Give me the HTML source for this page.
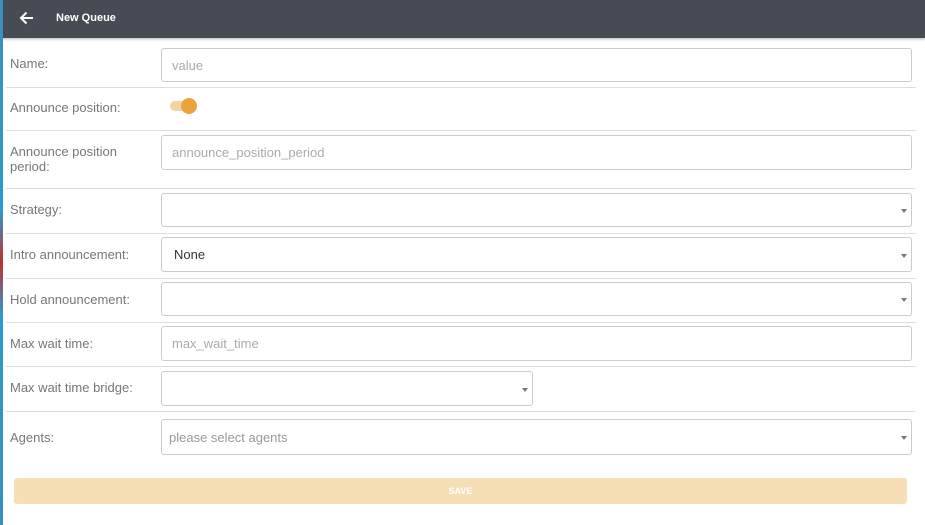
<!DOCTYPE html><html><head><style>
body{margin:0;width:925px;height:525px;overflow:hidden;background:#fff;font-family:"Liberation Sans",sans-serif;position:relative}
.strip{position:absolute;left:0;top:0;width:3px;height:525px;background:linear-gradient(#3a8fc0,#2a9ad0 40%,#c03030 50%,#2a9ad0 60%,#3a8fc0)}
.hdr{position:absolute;left:0;top:0;width:925px;height:38px;background:#474c54;box-shadow:0 1px 3px rgba(0,0,0,.3)}
.hdr .t{position:absolute;left:56px;top:12px;color:#fff;font-size:11px;font-weight:bold}
.lbl{position:absolute;left:10px;color:#777;font-size:13px;line-height:15px}
.sep{position:absolute;left:6px;width:910px;height:1px;background:#ddd}
.in{position:absolute;left:161px;width:751px;border:1px solid #ccc;border-radius:3px;box-sizing:border-box;font-size:13px;color:#aaa;padding-left:10px;display:flex;align-items:center}
.in.sel::after{content:"";position:absolute;right:4px;top:50%;margin-top:-1px;border:3px solid transparent;border-top:4px solid #777;border-bottom:0}
</style></head><body>
<div class="hdr"><svg style="position:absolute;left:19px;top:11px" width="15" height="14" viewBox="0 0 15 14"><path d="M14 7H2M7.5 1.5L2 7l5.5 5.5" stroke="#fff" stroke-width="2" fill="none"/></svg><div class="t">New Queue</div></div>
<div class="strip"></div>
<div class="lbl" style="top:56px">Name:</div><div class="in" style="top:48px;height:34px">value</div>
<div class="sep" style="top:87px"></div>
<div class="lbl" style="top:100px">Announce position:</div>
<div style="position:absolute;left:170px;top:101px;width:24px;height:10px;border-radius:5px;background:#f3d3a3"></div>
<div style="position:absolute;left:181px;top:98px;width:16px;height:16px;border-radius:50%;background:#eda33c"></div>
<div class="sep" style="top:130px"></div>
<div class="lbl" style="top:144px">Announce position<br>period:</div><div class="in" style="top:135px;height:35px">announce_position_period</div>
<div class="sep" style="top:188px"></div>
<div class="lbl" style="top:202px">Strategy:</div><div class="in sel" style="top:193px;height:34px"></div>
<div class="sep" style="top:233px"></div>
<div class="lbl" style="top:247px">Intro announcement:</div><div class="in sel" style="top:237px;height:35px;color:#333;padding-left:12px">None</div>
<div class="sep" style="top:278px"></div>
<div class="lbl" style="top:292px">Hold announcement:</div><div class="in sel" style="top:282px;height:34px"></div>
<div class="sep" style="top:322px"></div>
<div class="lbl" style="top:336px">Max wait time:</div><div class="in" style="top:326px;height:35px">max_wait_time</div>
<div class="sep" style="top:366px"></div>
<div class="lbl" style="top:380px">Max wait time bridge:</div><div class="in sel" style="top:371px;height:35px;width:372px"></div>
<div class="sep" style="top:411px"></div>
<div class="lbl" style="top:430px">Agents:</div><div class="in sel" style="top:419px;height:36px;padding-left:7px;color:#999">please select agents</div>
<div style="position:absolute;left:14px;top:478px;width:893px;height:26px;background:#f6deb5;border-radius:3px;color:#fff;font-size:9px;font-weight:bold;text-align:center;line-height:26px">SAVE</div>
</body></html>
